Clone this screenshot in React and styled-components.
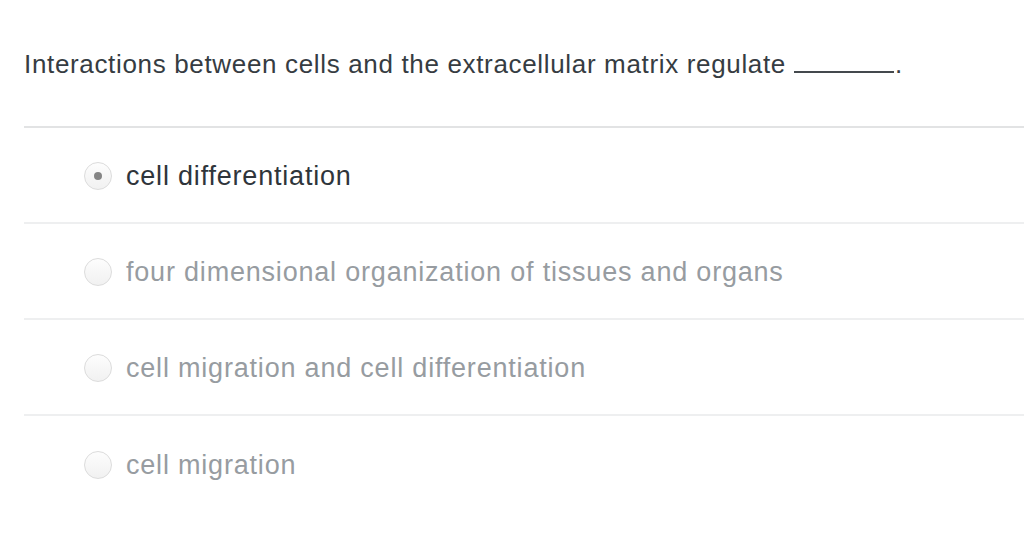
import styled, { createGlobalStyle } from "styled-components";

const GlobalStyle = createGlobalStyle`
  html, body {
    margin: 0;
    padding: 0;
    background: #fff;
  }
  body {
    font-family: "Liberation Sans", Arial, sans-serif;
  }
`;

const Page = styled.div`
  width: 1024px;
  height: 546px;
  overflow: hidden;
  padding-left: 24px;
  box-sizing: border-box;
`;

const Question = styled.div`
  padding-top: 49px;
  height: 128px;
  box-sizing: border-box;
  font-size: 26px;
  letter-spacing: 0.66px;
  color: #363c42;
  border-bottom: 2px solid #e2e3e4;
`;

const Blank = styled.span`
  display: inline-block;
  width: 100px;
  border-bottom: 2px solid #44494e;
  margin-left: 8px;
  margin-right: 1px;
  height: 22px;
`;

const Options = styled.ul`
  list-style: none;
  margin: 0;
  padding: 0;
`;

const Option = styled.li`
  display: flex;
  align-items: center;
  gap: 14px;
  height: 96px;
  padding-left: 60px;
  padding-top: 2px;
  box-sizing: border-box;
  border-bottom: ${(p) => (p.$last ? "none" : "2px solid #eeeff0")};
  font-size: 27px;
  letter-spacing: 0.8px;
  color: ${(p) => (p.$selected ? "#2f353b" : "#979ca1")};
`;

const Radio = styled.span`
  width: 28px;
  height: 28px;
  border-radius: 50%;
  border: 1.5px solid #dcdcdc;
  background: linear-gradient(#fdfdfd, #f1f1f1);
  box-sizing: border-box;
  display: flex;
  align-items: center;
  justify-content: center;
  flex-shrink: 0;

  &::after {
    content: "";
    width: 8px;
    height: 8px;
    border-radius: 50%;
    background: #858585;
    display: ${(p) => (p.$selected ? "block" : "none")};
  }
`;

const answers = [
  "cell differentiation",
  "four dimensional organization of tissues and organs",
  "cell migration and cell differentiation",
  "cell migration",
];

export default function App() {
  return (
    <Page>
      <GlobalStyle />
      <Question>
        Interactions between cells and the extracellular matrix regulate
        <Blank />.
      </Question>
      <Options>
        {answers.map((a, i) => (
          <Option key={a} $selected={i === 0} $last={i === answers.length - 1}>
            <Radio $selected={i === 0} />
            {a}
          </Option>
        ))}
      </Options>
    </Page>
  );
}
